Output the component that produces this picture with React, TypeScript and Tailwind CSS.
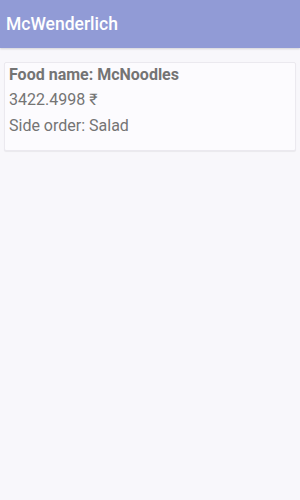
import React from "react";

export default function App() {
  return (
    <div className="w-[300px] h-[500px] bg-[#f8f7fb] flex flex-col" style={{ fontFamily: "Roboto, sans-serif" }}>
      <div className="h-[48px] bg-[#919bd6] flex items-center px-[6px] shadow-[0_1px_2px_rgba(0,0,0,0.15)]">
        <span className="text-white text-[17.5px] font-medium">McWenderlich</span>
      </div>
      <div className="px-[4px] pt-[14px]">
        <div className="bg-[#fcfbfe] rounded-[2px] border border-[#ebe9ef] shadow-[0_1px_1px_rgba(0,0,0,0.06)] px-[4px] pt-[1px] pb-[11px] text-[#747474] text-[16px] flex flex-col">
          <span className="font-bold leading-[22px]">Food name: McNoodles</span>
          <span className="leading-[26px] mt-[1px]">3422.4998 ₹</span>
          <span className="leading-[26px]">Side order: Salad</span>
        </div>
      </div>
    </div>
  );
}
